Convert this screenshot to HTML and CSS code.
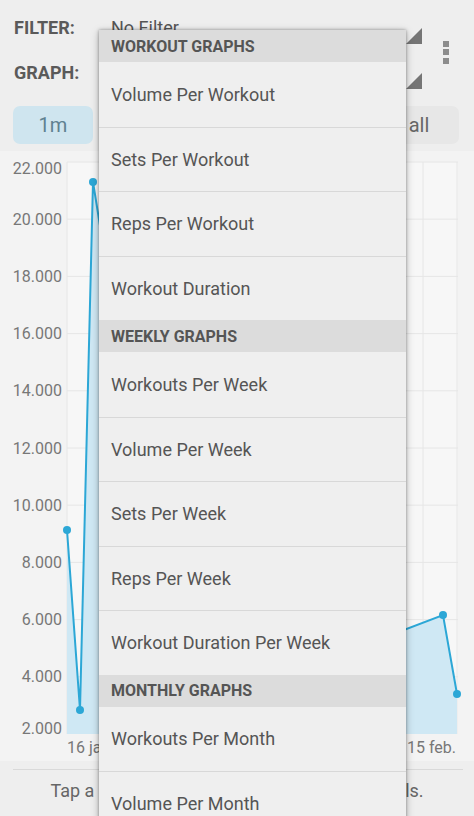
FILE: index.html
```html
<!DOCTYPE html>
<html>
<head>
<meta charset="utf-8">
<link rel="stylesheet" href="styles.css">
</head>
<body>
<div class="screen">
  <div class="selectors">
    <div class="sel-rows">
      <div class="sel-row">
        <span class="sel-label">FILTER:</span>
        <span class="sel-value">No Filter</span>
        <span class="sel-arrow"></span>
      </div>
      <div class="sel-row">
        <span class="sel-label">GRAPH:</span>
        <span class="sel-value">Volume Per Workout</span>
        <span class="sel-arrow"></span>
      </div>
    </div>
    <div class="overflow"><i></i><i></i><i></i></div>
  </div>

  <div class="ranges">
    <button class="range active">1m</button>
    <button class="range">3m</button>
    <button class="range">6m</button>
    <button class="range">1y</button>
    <button class="range">all</button>
  </div>

  <div class="chart">
    <svg class="chart-svg" width="474" height="610" viewBox="0 150 474 610">
      <rect class="plot-bg" x="67" y="161" width="391" height="572"/>
      <g class="grid">
        <line x1="67" x2="458" y1="161" y2="161"/>
        <line x1="67" x2="458" y1="218.2" y2="218.2"/>
        <line x1="67" x2="458" y1="275.4" y2="275.4"/>
        <line x1="67" x2="458" y1="332.6" y2="332.6"/>
        <line x1="67" x2="458" y1="389.8" y2="389.8"/>
        <line x1="67" x2="458" y1="447" y2="447"/>
        <line x1="67" x2="458" y1="504.2" y2="504.2"/>
        <line x1="67" x2="458" y1="561.4" y2="561.4"/>
        <line x1="67" x2="458" y1="618.6" y2="618.6"/>
        <line x1="67" x2="458" y1="675.8" y2="675.8"/>
        <line x1="67" x2="67" y1="161" y2="733"/>
        <line x1="160" x2="160" y1="161" y2="733"/>
        <line x1="255" x2="255" y1="161" y2="733"/>
        <line x1="340" x2="340" y1="161" y2="733"/>
        <line x1="423" x2="423" y1="161" y2="733"/>
        <line x1="457" x2="457" y1="161" y2="733"/>
      </g>
      <polygon class="area" points="67,529 80,709 93,181 160,600 230,520 300,650 375,640 443,614 457,693 457,733 67,733"/>
      <polyline class="line" points="67,529 80,709 93,181 160,600 230,520 300,650 375,640 443,614 457,693"/>
      <g class="dots">
        <circle cx="67" cy="529" r="4"/>
        <circle cx="80" cy="709" r="4"/>
        <circle cx="93" cy="181" r="4"/>
        <circle cx="160" cy="600" r="4"/>
        <circle cx="230" cy="520" r="4"/>
        <circle cx="300" cy="650" r="4"/>
        <circle cx="375" cy="640" r="4"/>
        <circle cx="443" cy="614" r="4"/>
        <circle cx="457" cy="693" r="4"/>
      </g>
      <g class="ylabels">
        <text x="62" y="167">22.000</text>
        <text x="62" y="218.2">20.000</text>
        <text x="62" y="275.4">18.000</text>
        <text x="62" y="332.6">16.000</text>
        <text x="62" y="389.8">14.000</text>
        <text x="62" y="447">12.000</text>
        <text x="62" y="504.2">10.000</text>
        <text x="62" y="561.4">8.000</text>
        <text x="62" y="618.6">6.000</text>
        <text x="62" y="675.8">4.000</text>
        <text x="62" y="727">2.000</text>
      </g>
      <g class="xlabels">
        <text x="67" y="746" class="xstart">16 jan.</text>
        <text x="456" y="746" class="xend">15 feb.</text>
      </g>
    </svg>
  </div>

  <div class="divider"></div>
  <p class="hint">Tap a point in the graph to see workout details.</p>
</div>

<div class="dropdown">
  <div class="group-header">WORKOUT GRAPHS</div>
  <div class="item">Volume Per Workout</div>
  <div class="item">Sets Per Workout</div>
  <div class="item">Reps Per Workout</div>
  <div class="item">Workout Duration</div>
  <div class="group-header">WEEKLY GRAPHS</div>
  <div class="item">Workouts Per Week</div>
  <div class="item">Volume Per Week</div>
  <div class="item">Sets Per Week</div>
  <div class="item">Reps Per Week</div>
  <div class="item">Workout Duration Per Week</div>
  <div class="group-header">MONTHLY GRAPHS</div>
  <div class="item">Workouts Per Month</div>
  <div class="item">Volume Per Month</div>
</div>
</body>
</html>
```

FILE: styles.css
```css
* { box-sizing: border-box; }

html, body {
  margin: 0;
  padding: 0;
  width: 474px;
  height: 816px;
  overflow: hidden;
  background: #eeeeee;
  font-family: Roboto, "Noto Sans", Arial, sans-serif;
  color: #555;
}

.screen {
  position: relative;
  width: 474px;
  height: 816px;
}

/* selectors */
.selectors {
  display: flex;
  padding-top: 5px;
}
.sel-rows {
  flex: 1;
  display: flex;
  flex-direction: column;
}
.sel-row {
  display: flex;
  align-items: center;
  height: 45px;
  padding-left: 14px;
}
.sel-label {
  width: 97px;
  font-weight: 700;
  font-size: 18px;
  color: #5a5a5a;
}
.sel-value {
  flex: 1;
  font-size: 18px;
  color: #555;
}
.sel-arrow {
  width: 16px;
  height: 16px;
  align-self: flex-end;
  margin-bottom: 6px;
  background: #757575;
  clip-path: polygon(100% 0, 100% 100%, 0 100%);
}
.overflow {
  width: 52px;
  display: flex;
  flex-direction: column;
  align-items: center;
  justify-content: center;
  gap: 2.5px;
  padding-right: 4px;
  padding-top: 4px;
}
.overflow i {
  display: block;
  width: 6px;
  height: 6px;
  background: #8c8c8c;
}

/* range buttons */
.ranges {
  display: grid;
  grid-template-columns: repeat(5, 1fr);
  gap: 11.5px;
  margin: 11px 15px 0 13px;
  height: 38px;
}
.range {
  border: none;
  border-radius: 7px;
  background: #e7e7e7;
  font-family: Roboto, "Noto Sans", Arial, sans-serif;
  font-size: 20px;
  color: #666;
  padding: 0;
}
.range.active {
  background: #cfe5ef;
  color: #5f8191;
}

/* chart */
.chart {
  margin-top: 7px;
  height: 610px;
  background: #f3f3f3;
}
.chart-svg {
  display: block;
}
.plot-bg { fill: #f7f7f7; }
.grid line {
  stroke: #e6e6e6;
  stroke-width: 1;
}
.area { fill: #cfe8f4; }
.line {
  fill: none;
  stroke: #2ca7d6;
  stroke-width: 2;
}
.dots circle { fill: #2ca7d6; }
.ylabels text, .xlabels text {
  font-family: Roboto, "Noto Sans", Arial, sans-serif;
  font-size: 16px;
  fill: #777;
  dominant-baseline: central;
}
.ylabels text { text-anchor: end; }
.xstart { text-anchor: start; }
.xend { text-anchor: end; }

.divider {
  margin: 8px 11px 0 13px;
  height: 1px;
  background: #d9d9d9;
}
.hint {
  margin: 10px 0 0;
  text-align: center;
  font-size: 18px;
  line-height: 22px;
  color: #666;
}

/* dropdown popup */
.dropdown {
  position: absolute;
  left: 99px;
  top: 30px;
  width: 307px;
  height: 820px;
  background: #efefef;
  box-shadow: 0 0 3px rgba(0,0,0,0.35), 0 2px 8px rgba(0,0,0,0.25);
  overflow: hidden;
}
.group-header {
  height: 32px;
  display: flex;
  align-items: center;
  padding-left: 12px;
  background: #dcdcdc;
  font-weight: 700;
  font-size: 16px;
  color: #555;
}
.item {
  height: 64.5px;
  display: flex;
  align-items: center;
  padding-left: 12px;
  font-size: 18px;
  color: #555;
}
.item + .item {
  border-top: 1px solid #d8d8d8;
}
```
